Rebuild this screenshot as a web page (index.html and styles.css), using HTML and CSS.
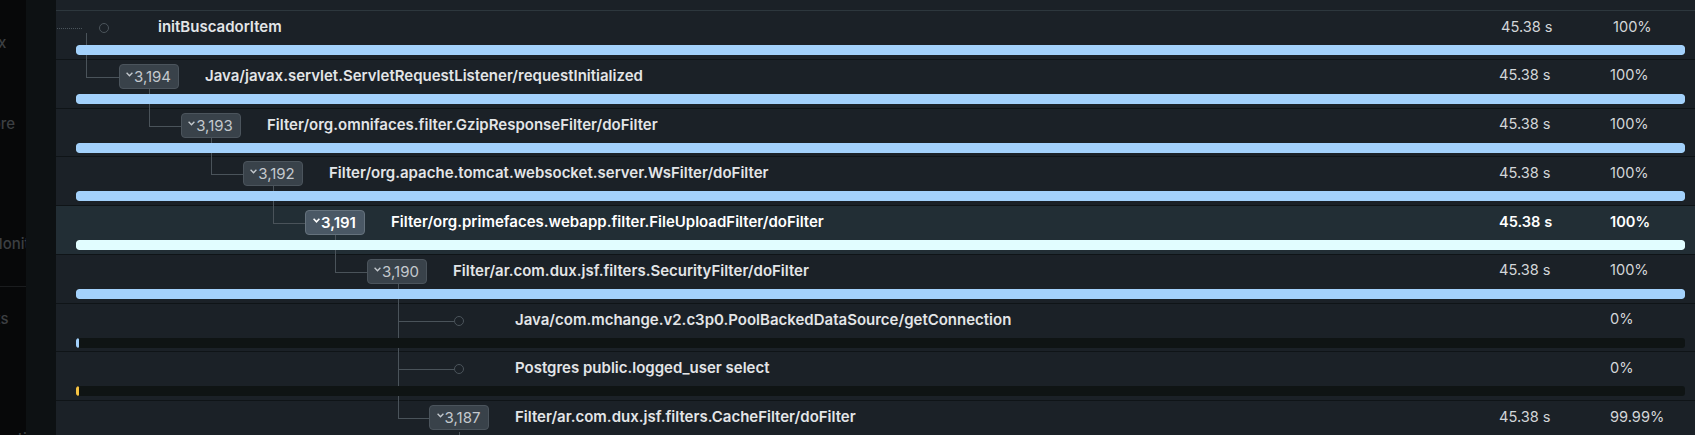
FILE: index.html
```html
<!DOCTYPE html>
<html lang="en">
<head>
<meta charset="utf-8">
<title>Trace</title>
<link rel="stylesheet" href="styles.css">
</head>
<body>
<div class="app">
  <nav class="sidebar">
    <div class="nav-list">
      <div class="nav-item">Flex</div>
      <div class="nav-item">Git</div>
      <div class="nav-item">Store</div>
      <div class="nav-item">UI</div>
      <div class="nav-item">Git</div>
      <div class="nav-item sub">Monitoring</div>
      <div class="nav-divider"></div>
      <div class="nav-item">Sets</div>
      <div class="nav-item">UI</div>
      <div class="nav-item">Git</div>
      <div class="nav-item sub">Centillion</div>
    </div>
  </nav>
  <div class="gutter"></div>
  <main class="trace">
    <div class="trace-top"></div>

    <div class="row root">
      <span class="root-dots"></span>
      <div class="row-line">
        <span class="node"><span class="leaf-dot"></span></span>
        <span class="name">initBuscadorItem</span>
        <span class="time">45.38 s</span>
        <span class="pct">100%</span>
      </div>
      <div class="bar"><div class="fill" style="width:100%"></div></div>
    </div>

    <div class="row lvl-1">
      <span class="elbow from-root"></span>
      <div class="row-line">
        <span class="node"><span class="badge"><svg class="chev" width="7" height="5" viewBox="0 0 7 5"><path d="M0.6 0.8 L3.5 3.8 L6.4 0.8"/></svg>3,194</span></span>
        <span class="name">Java/javax.servlet.ServletRequestListener/requestInitialized</span>
        <span class="time">45.38 s</span>
        <span class="pct">100%</span>
      </div>
      <div class="bar"><div class="fill" style="width:100%"></div></div>
    </div>

    <div class="row lvl-2">
      <span class="elbow d1"></span>
      <div class="row-line">
        <span class="node"><span class="badge"><svg class="chev" width="7" height="5" viewBox="0 0 7 5"><path d="M0.6 0.8 L3.5 3.8 L6.4 0.8"/></svg>3,193</span></span>
        <span class="name">Filter/org.omnifaces.filter.GzipResponseFilter/doFilter</span>
        <span class="time">45.38 s</span>
        <span class="pct">100%</span>
      </div>
      <div class="bar"><div class="fill" style="width:100%"></div></div>
    </div>

    <div class="row lvl-3">
      <span class="elbow d1"></span>
      <div class="row-line">
        <span class="node"><span class="badge"><svg class="chev" width="7" height="5" viewBox="0 0 7 5"><path d="M0.6 0.8 L3.5 3.8 L6.4 0.8"/></svg>3,192</span></span>
        <span class="name">Filter/org.apache.tomcat.websocket.server.WsFilter/doFilter</span>
        <span class="time">45.38 s</span>
        <span class="pct">100%</span>
      </div>
      <div class="bar"><div class="fill" style="width:100%"></div></div>
    </div>

    <div class="row lvl-4 selected">
      <span class="elbow d1"></span>
      <div class="row-line">
        <span class="node"><span class="badge"><svg class="chev" width="7" height="5" viewBox="0 0 7 5"><path d="M0.6 0.8 L3.5 3.8 L6.4 0.8"/></svg>3,191</span></span>
        <span class="name">Filter/org.primefaces.webapp.filter.FileUploadFilter/doFilter</span>
        <span class="time">45.38 s</span>
        <span class="pct">100%</span>
      </div>
      <div class="bar"><div class="fill" style="width:100%"></div></div>
    </div>

    <div class="row lvl-5">
      <span class="elbow d1"></span>
      <div class="row-line">
        <span class="node"><span class="badge"><svg class="chev" width="7" height="5" viewBox="0 0 7 5"><path d="M0.6 0.8 L3.5 3.8 L6.4 0.8"/></svg>3,190</span></span>
        <span class="name">Filter/ar.com.dux.jsf.filters.SecurityFilter/doFilter</span>
        <span class="time">45.38 s</span>
        <span class="pct">100%</span>
      </div>
      <div class="bar"><div class="fill" style="width:100%"></div></div>
    </div>

    <div class="row lvl-6 leaf">
      <span class="elbow d1"></span>
      <div class="row-line">
        <span class="node"><span class="leaf-dot"></span></span>
        <span class="name">Java/com.mchange.v2.c3p0.PoolBackedDataSource/getConnection</span>
        <span class="time"></span>
        <span class="pct">0%</span>
      </div>
      <div class="bar"><div class="fill sliver"></div></div>
    </div>

    <div class="row lvl-6 leaf">
      <span class="elbow d2"></span>
      <div class="row-line">
        <span class="node"><span class="leaf-dot"></span></span>
        <span class="name">Postgres public.logged_user select</span>
        <span class="time"></span>
        <span class="pct">0%</span>
      </div>
      <div class="bar"><div class="fill sliver db"></div></div>
    </div>

    <div class="row lvl-6 open">
      <span class="elbow d3"></span>
      <div class="row-line">
        <span class="node"><span class="badge"><svg class="chev" width="7" height="5" viewBox="0 0 7 5"><path d="M0.6 0.8 L3.5 3.8 L6.4 0.8"/></svg>3,187</span></span>
        <span class="name">Filter/ar.com.dux.jsf.filters.CacheFilter/doFilter</span>
        <span class="time">45.38 s</span>
        <span class="pct">99.99%</span>
      </div>
      <div class="bar"><div class="fill" style="width:99.99%"></div></div>
    </div>
  </main>
</div>
</body>
</html>
```
FILE: styles.css
```css
* { box-sizing: border-box; }

html, body {
  margin: 0;
  height: 100%;
  overflow: hidden;
}

body {
  background: #0c1012;
  font-family: Inter, "Noto Sans", "Liberation Sans", sans-serif;
  font-size: 15px;
}

.app {
  display: flex;
  height: 100vh;
}

/* ---------- sidebar (clipped) ---------- */
.sidebar {
  width: 26px;
  flex: none;
  background: #070809;
  overflow: hidden;
}

.nav-list {
  margin-left: -23px;
  padding-top: 23px;
  width: 200px;
}

.nav-item {
  height: 40.25px;
  line-height: 40.25px;
  color: #3c3f42;
  font-size: 15px;
  font-weight: 500;
  white-space: nowrap;
}

.nav-item.sub { padding-left: 12px; }

.nav-divider {
  height: 1px;
  background: #1a1c1e;
  margin: 21px 0 12px;
}

.gutter {
  width: 30px;
  flex: none;
  background: #0d1113;
}

/* ---------- trace tree ---------- */
.trace {
  flex: 1;
  min-width: 0;
  background: #1b2127;
}

.trace-top {
  height: 11px;
  border-bottom: 1px solid #2d373d;
}

.row {
  position: relative;
  height: 48.75px;
  display: flex;
  flex-direction: column;
  border-bottom: 1px solid #0f1417;
}

.row.selected { background: #222e35; }

.row-line {
  height: 31px;
  display: flex;
  align-items: center;
  white-space: nowrap;
}

.node {
  width: 60px;
  flex: none;
  display: flex;
  justify-content: center;
  align-items: center;
  position: relative;
  z-index: 2;
}

.name {
  flex: 1;
  min-width: 0;
  margin-left: 26px;
  color: #e3e5e7;
  font-size: 15px;
  font-weight: 600;
  overflow: hidden;
}

.time {
  width: 111px;
  flex: none;
  color: #d3d6d9;
  font-size: 14.6px;
}

.pct {
  width: 85px;
  flex: none;
  color: #d3d6d9;
  font-size: 14.6px;
}

.selected .name { color: #ffffff; }
.selected .time,
.selected .pct { color: #ffffff; font-weight: 600; }

/* indentation per depth */
.lvl-1 .row-line { padding-left: 63px; }
.lvl-2 .row-line { padding-left: 125px; }
.lvl-3 .row-line { padding-left: 187px; }
.lvl-4 .row-line { padding-left: 249px; }
.lvl-5 .row-line { padding-left: 311px; }
.lvl-6 .row-line { padding-left: 373px; }

.root .row-line { padding-left: 18px; }
.root .name { margin-left: 24px; }
.root .time { padding-left: 2px; }
.root .pct { padding-left: 3px; }

/* badge */
.badge {
  width: 60px;
  height: 25px;
  margin-top: 2px;
  display: flex;
  align-items: center;
  justify-content: center;
  gap: 1px;
  background: #39424a;
  border: 1px solid #4b545c;
  border-radius: 4px;
  color: #c4c9ce;
  font-size: 15px;
  padding-right: 1px;
}

.chev {
  margin-top: -4px;
  fill: none;
  stroke: #c4c9ce;
  stroke-width: 1.3;
}

.selected .badge {
  background: #4a5865;
  border-color: #65727d;
  color: #ffffff;
  font-weight: 600;
}
.selected .chev { stroke: #ffffff; stroke-width: 1.6; }

.leaf-dot {
  width: 10px;
  height: 10px;
  margin-top: 3px;
  border-radius: 50%;
  border: 1px solid #4b545b;
  background: transparent;
}

/* bar */
.bar {
  position: relative;
  z-index: 2;
  margin: 3px 10px 0 20px;
  height: 10px;
  border-radius: 3px;
  background: #0f1414;
  overflow: hidden;
}

.fill {
  height: 100%;
  background: #a3d1fb;
  border-radius: 3px;
}

.selected .fill { background: #e1fdff; }

.fill.sliver { width: 3px; border-radius: 2px; }
.fill.db { background: #f6c343; }

/* tree connectors */
.root-dots {
  position: absolute;
  left: 1px;
  top: 17px;
  width: 25px;
  border-top: 1px dotted #4a545b;
}

.elbow {
  position: absolute;
  z-index: 1;
  border-left: 1px solid #4a535a;
  border-bottom: 1px solid #4a535a;
}

.elbow.from-root { left: 30px; width: 33px; top: -26.75px; height: 44.75px; }

.elbow.d1 { top: -19.75px; height: 37.75px; }
.elbow.d2 { top: -68.5px; height: 86.5px; }
.elbow.d3 { top: -117.25px; height: 135.25px; }

.lvl-2 .elbow { left: 93px; width: 32px; }
.lvl-3 .elbow { left: 155px; width: 32px; }
.lvl-4 .elbow { left: 217px; width: 32px; }
.lvl-5 .elbow { left: 279px; width: 32px; }
.lvl-6 .elbow { left: 342px; width: 31px; }
.lvl-6.leaf .elbow { width: 56px; }

.open .node::after {
  content: "";
  position: absolute;
  left: 30px;
  top: 29px;
  height: 40px;
  border-left: 1px solid #4a535a;
}
```
